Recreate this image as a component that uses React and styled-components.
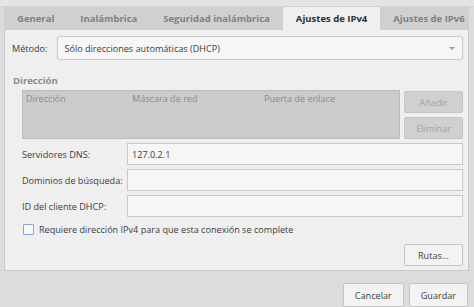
import React from "react";
import styled, { createGlobalStyle } from "styled-components";

const GlobalStyle = createGlobalStyle`
  html, body {
    margin: 0;
    padding: 0;
    background: #dcdcdc;
  }
  body {
    font-family: "Open Sans", "Noto Sans", sans-serif;
    font-size: 9.1px;
    color: #3c3c3c;
  }
`;

const tabs = ["General", "Inalámbrica", "Seguridad inalámbrica", "Ajustes de IPv4", "Ajustes de IPv6"];

function App() {
    return (
        <Window>
            <GlobalStyle />
            <TopStrip />
            <Notebook>
                <TabBar>
                    {tabs.map((t) => (
                        <Tab key={t} $active={t === "Ajustes de IPv4"}>{t}</Tab>
                    ))}
                </TabBar>
                <Panel>
                    <MethodRow>
                        <span>Método:</span>
                        <Combo>
                            <span>Sólo direcciones automáticas (DHCP)</span>
                            <Arrow />
                        </Combo>
                    </MethodRow>
                    <SectionTitle>Dirección</SectionTitle>
                    <AddressRow>
                        <Table>
                            <Col $w={106}>Dirección</Col>
                            <Col $w={132}>Máscara de red</Col>
                            <Col>Puerta de enlace</Col>
                        </Table>
                        <ButtonColumn>
                            <Button disabled>Añadir</Button>
                            <Button disabled>Eliminar</Button>
                        </ButtonColumn>
                    </AddressRow>
                    <Fields>
                        <FieldLabel>Servidores DNS:</FieldLabel>
                        <Input>127.0.2.1</Input>
                        <FieldLabel>Dominios de búsqueda:</FieldLabel>
                        <Input />
                        <FieldLabel>ID del cliente DHCP:</FieldLabel>
                        <Input />
                    </Fields>
                    <CheckRow>
                        <Check />
                        <span>Requiere dirección IPv4 para que esta conexión se complete</span>
                    </CheckRow>
                    <RoutesRow>
                        <Button>Rutas...</Button>
                    </RoutesRow>
                </Panel>
            </Notebook>
            <Footer>
                <Button $wide>Cancelar</Button>
                <Button $wide>Guardar</Button>
            </Footer>
        </Window>
    );
}

const Window = styled.div`
    width: 474px;
    height: 307px;
    display: flex;
    flex-direction: column;
    overflow: hidden;
`;

const TopStrip = styled.div`
    height: 7px;
    background: #e4e4e4;
    border-bottom: 1px solid #d2d2d2;
    box-sizing: border-box;
`;

const Notebook = styled.div`
    margin: 0 5px 0 4px;
    display: flex;
    flex-direction: column;
`;

const TabBar = styled.div`
    display: flex;
    height: 23px;
    background: #d0d0d0;
`;

const Tab = styled.div`
    flex: 1 1 auto;
    display: flex;
    align-items: center;
    justify-content: center;
    padding: 0 13px;
    font-size: 9.5px;
    font-weight: 700;
    color: ${(p) => (p.$active ? "#2f2f2f" : "#808080")};
    background: ${(p) => (p.$active ? "#efefef" : "transparent")};
    white-space: nowrap;
`;

const Panel = styled.div`
    background: #efefef;
    border: 1px solid #c6c6c6;
    border-top: none;
    height: 241px;
    box-sizing: border-box;
    padding: 6px 5px 0 7px;
    display: flex;
    flex-direction: column;
`;

const MethodRow = styled.div`
    display: flex;
    align-items: center;
    gap: 10px;
`;

const Combo = styled.div`
    flex: 1;
    height: 24px;
    box-sizing: border-box;
    border: 1px solid #c9c9c9;
    border-radius: 2px;
    background: #f6f6f6;
    display: flex;
    align-items: center;
    justify-content: space-between;
    padding: 0 7px 0 6px;
`;

const Arrow = styled.span`
    width: 0;
    height: 0;
    border-left: 3px solid transparent;
    border-right: 3px solid transparent;
    border-top: 3px solid #9a9a9a;
`;

const SectionTitle = styled.div`
    font-size: 9.5px;
    font-weight: 700;
    color: #8a8a8a;
    margin: 14px 0 0 1px;
`;

const AddressRow = styled.div`
    display: flex;
    gap: 4px;
    margin: 3px 0 0 10px;
`;

const Table = styled.div`
    flex: 1;
    height: 49px;
    box-sizing: border-box;
    background: #cbcbcb;
    border: 1px solid #bdbdbd;
    display: flex;
    padding: 1px 0 0 3px;
    color: #8c8c8c;
`;

const Col = styled.div`
    width: ${(p) => (p.$w ? p.$w + "px" : "auto")};
`;

const ButtonColumn = styled.div`
    display: flex;
    flex-direction: column;
    gap: 4px;
    padding-top: 1px;
`;

const Button = styled.button`
    font: inherit;
    width: ${(p) => (p.$wide ? "auto" : "59px")};
    min-width: 56px;
    height: ${(p) => (p.$wide ? "24px" : "22px")};
    padding: 0 11px;
    border-radius: 2px;
    border: 1px solid ${(p) => (p.disabled ? "#c6c6c6" : "#c4c4c4")};
    background: ${(p) => (p.disabled ? "#d0d0d0" : "#f3f3f3")};
    color: ${(p) => (p.disabled ? "#a2a2a2" : "#3c3c3c")};
`;

const Fields = styled.div`
    display: grid;
    grid-template-columns: 105px 1fr;
    row-gap: 4px;
    align-items: center;
    margin: 4px 0 0 10px;
`;

const FieldLabel = styled.div`
    white-space: nowrap;
`;

const Input = styled.div`
    height: 22px;
    box-sizing: border-box;
    border: 1px solid #c9c9c9;
    background: #f6f6f6;
    display: flex;
    align-items: center;
    padding: 0 4px;
`;

const CheckRow = styled.div`
    display: flex;
    align-items: center;
    gap: 5px;
    margin: 6px 0 0 11px;
`;

const Check = styled.span`
    width: 9px;
    height: 9px;
    border: 1px solid #8aa4c8;
    border-radius: 1px;
    background: #f8f8f8;
`;

const RoutesRow = styled.div`
    display: flex;
    justify-content: flex-end;
    margin-top: 8px;
`;

const Footer = styled.div`
    display: flex;
    justify-content: flex-end;
    gap: 5px;
    padding: 12px 6px 0 0;
`;

export default App;
